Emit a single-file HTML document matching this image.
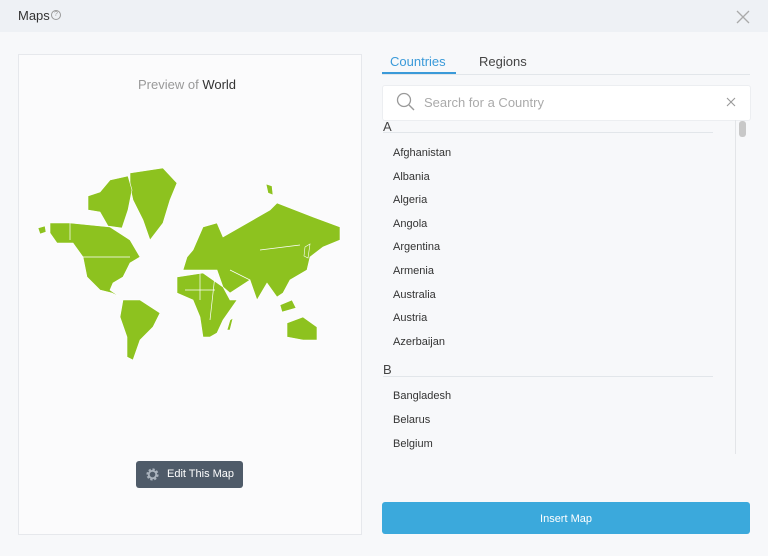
<!DOCTYPE html>
<html><head><style>
body{margin:0;width:768px;height:556px;background:#f7f8fa;font-family:"Liberation Sans",sans-serif;position:relative;overflow:hidden;color:#333}
.hdr{position:absolute;left:0;top:0;width:768px;height:32px;background:#eef1f5}
.t{position:absolute}
.card{position:absolute;left:18px;top:54px;width:342px;height:479px;background:#fbfbfc;border:1px solid #e6e8ec}
.btn{position:absolute;left:136px;top:461px;width:107px;height:27px;background:#4f5b69;border-radius:3px;color:#fff;font-size:11px}
.row{position:absolute;left:393px;font-size:11px;color:#333}
</style></head><body>
<div class="hdr"></div>
<div class="t" style="left:18px;top:8px;font-size:13px;color:#333">Maps</div>
<div class="t" style="left:51px;top:10px;width:8px;height:8px;border:1px solid #999;border-radius:50%;font-size:7px;color:#999;text-align:center;line-height:8px">?</div>
<svg class="t" style="left:736px;top:10px" width="14" height="14"><path d="M1 1L13 13M13 1L1 13" stroke="#aaa" stroke-width="1.3"/></svg>
<div class="card"></div>
<div class="t" style="left:138px;top:77px;font-size:13px;color:#999">Preview of <span style="color:#333">World</span></div>
<svg class="t" style="left:0;top:0" width="768" height="556">
<g fill="#8dc21f" stroke="#fff" stroke-width="0.6">
<polygon points="50,223 70,223 110,227 130,240 140,257 130,263 123,277 113,283 110,290 120,297 112,293 100,290 87,277 83,257 73,243 57,243 50,233"/>
<polygon points="38,228 45,226 46,232 40,234"/>
<polygon points="130,173 163,168 177,183 170,200 163,223 150,240 143,220 133,200 130,187"/>
<polygon points="110,180 128,176 132,190 128,210 122,228 108,226 100,212 88,210 88,196 100,192"/>
<polygon points="123,300 140,300 160,313 153,327 140,340 133,360 127,357 127,337 120,317"/>
<polygon points="193,250 203,227 217,223 223,237 270,210 277,203 313,217 340,227 340,240 323,247 310,257 307,270 290,280 283,293 277,297 267,283 257,300 250,280 230,293 223,287 217,270 197,270 183,270 187,257"/>
<polygon points="177,277 203,273 223,287 230,300 237,300 223,320 217,333 210,337 203,337 200,317 193,300 177,293"/>
<polygon points="287,323 303,317 317,327 317,340 303,340 287,337"/>
<polygon points="266,184 272,186 273,195 268,193"/>
<polygon points="305,247 310,244 308,258 304,256"/>
<polygon points="280,305 292,300 296,308 282,312"/>
<polygon points="230,320 233,318 230,330 227,330"/>
</g>
<g stroke="#fff" stroke-width="0.7" fill="none"><path d="M70 223V240M83 257H130M200 270V300M215 275L210 320M260 250L300 245M230 270L250 280M185 290H215"/></g>
</svg>
<div class="btn"><svg style="position:absolute;left:9px;top:6px" width="15" height="15" viewBox="0 0 16 16"><circle cx="8" cy="8" r="5" fill="none" stroke="#aab3bd" stroke-width="3" stroke-dasharray="2.2 1.7"/><circle cx="8" cy="8" r="4" fill="none" stroke="#aab3bd" stroke-width="2"/></svg><span style="position:absolute;left:31px;top:7px">Edit This Map</span></div>
<div class="t" style="left:390px;top:54px;font-size:13px;color:#3a9ad9">Countries</div>
<div class="t" style="left:479px;top:54px;font-size:13px;color:#444">Regions</div>
<div class="t" style="left:382px;top:74px;width:368px;height:1px;background:#e2e6ea"></div>
<div class="t" style="left:382px;top:72px;width:74px;height:2px;background:#3a9ad9"></div>
<div class="t" style="left:382px;top:85px;width:367px;height:34px;background:#fff;border:1px solid #eceef1;border-radius:3px"></div>
<svg class="t" style="left:396px;top:92px" width="20" height="20"><circle cx="8" cy="8" r="6.5" fill="none" stroke="#999" stroke-width="1.3"/><path d="M13 13L18 18" stroke="#999" stroke-width="1.4"/></svg>
<div class="t" style="left:424px;top:95px;font-size:13px;color:#aaa">Search for a Country</div>
<svg class="t" style="left:726px;top:97px" width="10" height="10"><path d="M1 1L9 9M9 1L1 9" stroke="#999" stroke-width="1.1"/></svg>
<div class="t" style="left:735px;top:120px;width:1px;height:334px;background:#e3e5e8"></div>
<div class="t" style="left:739px;top:121px;width:7px;height:16px;background:#c8c8c8;border-radius:3px"></div>
<div class="t" style="left:383px;top:119px;font-size:13px;color:#444">A</div>
<div class="t" style="left:383px;top:132px;width:330px;height:1px;background:#e2e6ea"></div>
<div class="row" style="top:147px">Afghanistan</div>
<div class="row" style="top:171px">Albania</div>
<div class="row" style="top:194px">Algeria</div>
<div class="row" style="top:218px">Angola</div>
<div class="row" style="top:241px">Argentina</div>
<div class="row" style="top:265px">Armenia</div>
<div class="row" style="top:289px">Australia</div>
<div class="row" style="top:312px">Austria</div>
<div class="row" style="top:336px">Azerbaijan</div>
<div class="t" style="left:383px;top:362px;font-size:13px;color:#444">B</div>
<div class="t" style="left:383px;top:376px;width:330px;height:1px;background:#e2e6ea"></div>
<div class="row" style="top:390px">Bangladesh</div>
<div class="row" style="top:414px">Belarus</div>
<div class="row" style="top:438px">Belgium</div>
<div class="t" style="left:382px;top:502px;width:368px;height:32px;background:#3ba9dc;border-radius:3px;color:#fff;font-size:11px;text-align:center;line-height:34px">Insert Map</div>
</body></html>
